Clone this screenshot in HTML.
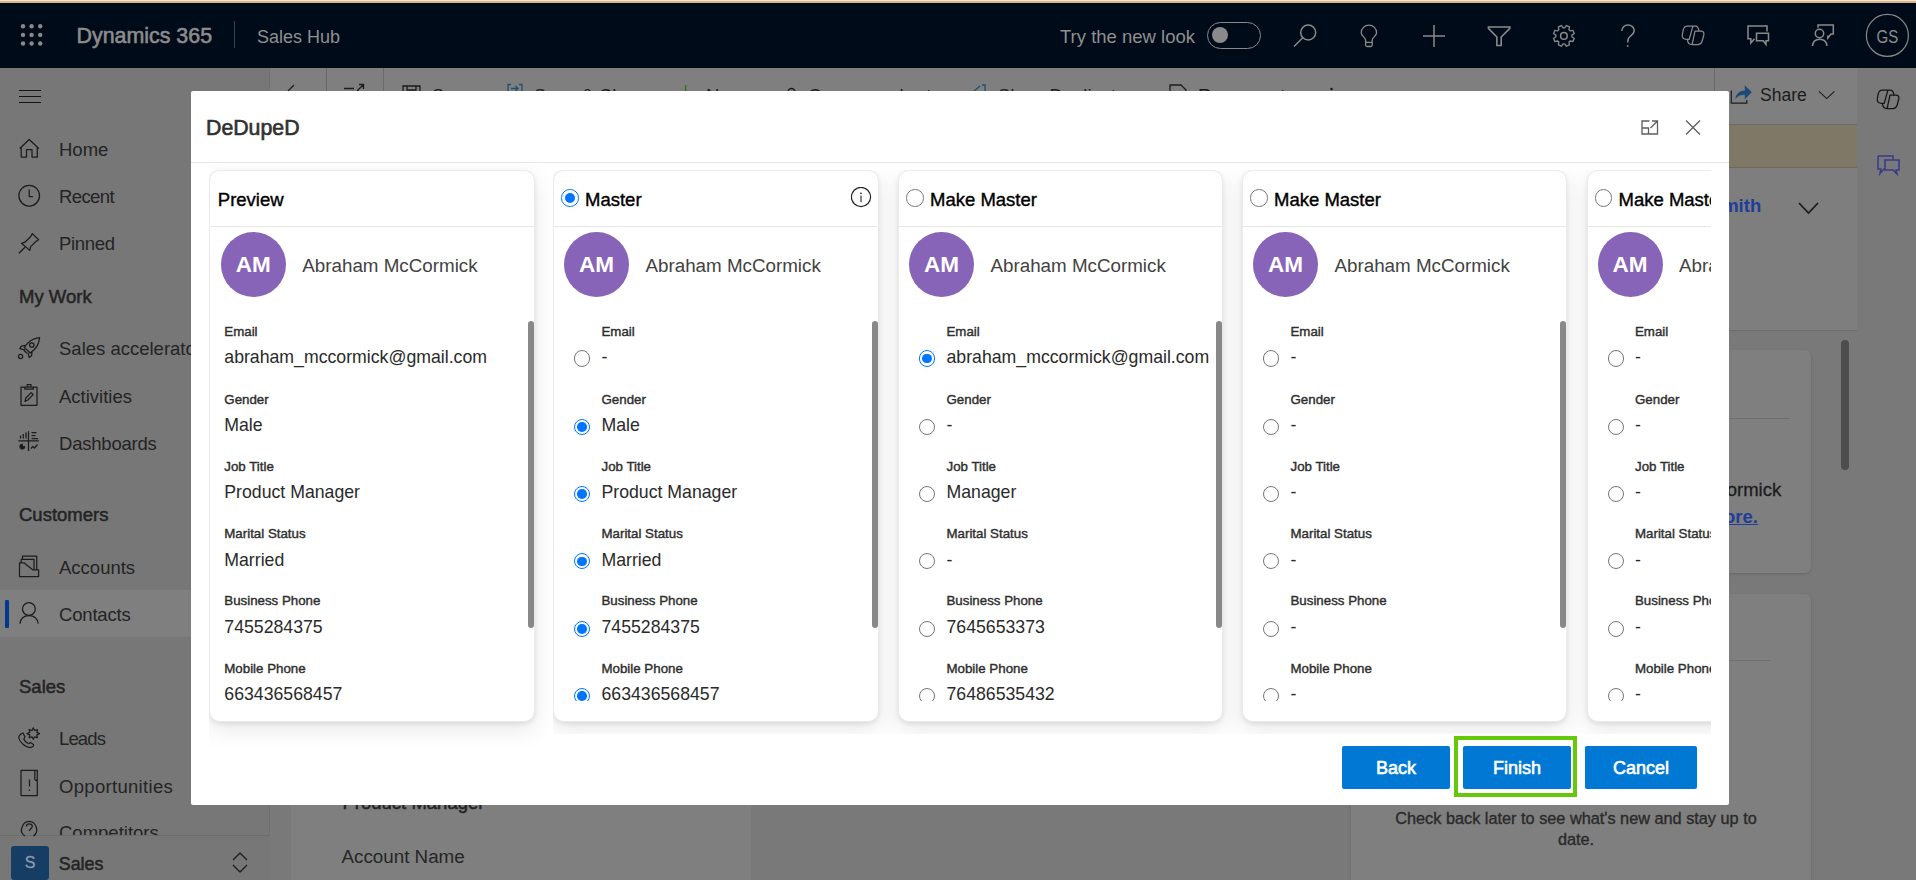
<!DOCTYPE html><html><head><meta charset="utf-8"><style>
html,body{margin:0;padding:0}
body{width:1916px;height:880px;overflow:hidden;position:relative;font-family:"Liberation Sans", sans-serif;background:#7a7a7a}
.t{position:absolute;white-space:nowrap;line-height:1}
</style></head><body>
<div style="position:absolute;left:0px;top:0px;width:1916px;height:68px;background:#000b19"></div>
<div style="position:absolute;left:0px;top:0px;width:1916px;height:1px;background:#ffe3bd"></div>
<div style="position:absolute;left:0px;top:1px;width:1916px;height:2px;background:#d2b796"></div>
<svg style="position:absolute;left:0;top:0" width="60" height="68" fill="#8a8a8a"><circle cx="23.0" cy="26.3" r="2.2"/><circle cx="23.0" cy="34.9" r="2.2"/><circle cx="23.0" cy="43.5" r="2.2"/><circle cx="31.6" cy="26.3" r="2.2"/><circle cx="31.6" cy="34.9" r="2.2"/><circle cx="31.6" cy="43.5" r="2.2"/><circle cx="40.2" cy="26.3" r="2.2"/><circle cx="40.2" cy="34.9" r="2.2"/><circle cx="40.2" cy="43.5" r="2.2"/></svg>
<div class="t" style="left:76.5px;top:25.88px;font-size:21.4px;color:#8c8c8c;-webkit-text-stroke:0.6px #8c8c8c;">Dynamics 365</div>
<div style="position:absolute;left:234px;top:21px;width:1px;height:27px;background:#3a3f4a"></div>
<div class="t" style="left:257px;top:28.26px;font-size:18px;color:#8f8f8f;">Sales Hub</div>
<div class="t" style="left:1060px;top:27.54px;font-size:18.5px;color:#8f8f8f;">Try the new look</div>
<div style="position:absolute;left:1207px;top:22px;width:54px;height:27px;border:1px solid #8a8a8a;border-radius:14px;box-sizing:border-box"></div>
<div style="position:absolute;left:1212px;top:27px;width:16px;height:16px;background:#8a8a8a;border-radius:50%"></div>
<svg style="position:absolute;left:0;top:0" width="1916" height="68">
<g fill="none" stroke="#8a8a8a" stroke-width="1.5">
<circle cx="1308.2" cy="32.5" r="7.5"/><line x1="1303" y1="37.5" x2="1294" y2="46.5"/>
<path d="M1365.6 40 C1365.6 37.5 1361.2 36 1361.2 32.8 A7.7 7.7 0 0 1 1376.6 32.8 C1376.6 36 1372.2 37.5 1372.2 40 L1372.2 45 Q1372.2 46.5 1370.6 46.5 L1367.2 46.5 Q1365.6 46.5 1365.6 45 Z M1365.6 42.3 L1372.2 42.3" stroke-width="1.3"/>
<line x1="1423" y1="36" x2="1445" y2="36"/><line x1="1434" y1="25" x2="1434" y2="47"/>
<path d="M1488.4 27 L1509.8 27 L1509.8 28.4 L1501.2 37 L1501.2 45.5 L1496.9 45.5 L1496.9 37 L1488.4 28.4 Z" stroke-width="1.6"/>
<circle cx="1563.9" cy="35.9" r="3.3"/>
<path d="M1564.67 27.94 L1566.37 25.59 L1569.44 26.86 L1568.99 29.73 L1570.07 30.81 L1572.94 30.36 L1574.21 33.43 L1571.86 35.13 L1571.86 36.67 L1574.21 38.37 L1572.94 41.44 L1570.07 40.99 L1568.99 42.07 L1569.44 44.94 L1566.37 46.21 L1564.67 43.86 L1563.13 43.86 L1561.43 46.21 L1558.36 44.94 L1558.81 42.07 L1557.73 40.99 L1554.86 41.44 L1553.59 38.37 L1555.94 36.67 L1555.94 35.13 L1553.59 33.43 L1554.86 30.36 L1557.73 30.81 L1558.81 29.73 L1558.36 26.86 L1561.43 25.59 L1563.13 27.94 Z" stroke-width="1.3"/>
<path d="M1621.8 31 C1621.8 27.5 1624.5 25 1628 25 C1631.5 25 1634.2 27.5 1634.2 30.5 C1634.2 33.5 1632 35 1630 36.5 C1628.3 37.8 1627.7 39 1627.7 42.5"/>
<circle cx="1627.7" cy="46" r="0.9" fill="#8a8a8a" stroke="none"/>
<g transform="translate(1670 18)" fill="none" stroke="#8a8a8a" stroke-width="1.25" stroke-linejoin="round"><path d="M22.9 8.2 L17.5 8.2 Q14.2 8.2 13.2 12 L12.4 16.5 Q11.6 21.3 16.5 21.3 L19.2 21.3 Z M22.9 8.2 L25.5 8.2 Q28 8.2 29.1 13.1 M25 13.1 L30.8 13.1 Q34.6 13.1 33.8 17 L32.3 22.5 Q31.2 26.6 27.5 26.6 L22.1 26.6 Z M17.4 21.3 Q17.6 26.6 22.1 26.6"/></g>
<path d="M1767 31.5 L1767 26 L1748 26 L1748 38.8 L1750.8 38.8 L1750.8 43 L1754.5 38.8"/>
<path d="M1756.5 33.3 L1768.5 33.3 L1768.5 40.8 L1766 40.8 L1766 44.5 L1763.2 40.8 L1756.5 40.8 Z"/>
<circle cx="1819.5" cy="33.5" r="4.2"/><path d="M1812.5 46 C1813 41.5 1815.5 39.3 1819.7 39.3 C1824 39.3 1826.5 41.5 1827 46"/>
<path d="M1818 27.8 L1818 25 L1833.3 25 L1833.3 34 L1831 34 L1827.8 38 L1827.8 35.5"/>
<circle cx="1887.4" cy="35.4" r="21" stroke-width="1.2"/>
</g></svg>
<div class="t" style="left:1866px;top:28.6px;width:43px;text-align:center;font-size:17.5px;color:#8f8f8f;transform:scaleX(.86)">GS</div>
<div style="position:absolute;left:0px;top:68px;width:270px;height:812px;background:#777777"></div>
<div style="position:absolute;left:269px;top:68px;width:1px;height:812px;background:#6f6f6f"></div>
<div style="position:absolute;left:19px;top:90px;width:22px;height:1.2px;background:#141414"></div>
<div style="position:absolute;left:19px;top:96px;width:22px;height:1.2px;background:#141414"></div>
<div style="position:absolute;left:19px;top:101.5px;width:22px;height:1.2px;background:#141414"></div>
<div class="t" style="left:59px;top:141.04px;font-size:18.5px;color:#242424;letter-spacing:0px;">Home</div>
<div class="t" style="left:59px;top:188.04px;font-size:18.5px;color:#242424;letter-spacing:-0.6px;">Recent</div>
<div class="t" style="left:59px;top:235.04px;font-size:18.5px;color:#242424;letter-spacing:-0.32px;">Pinned</div>
<div class="t" style="left:19px;top:288.04px;font-size:18.5px;color:#242424;-webkit-text-stroke:0.5px #242424;">My Work</div>
<div class="t" style="left:59px;top:339.54px;font-size:18.5px;color:#242424;letter-spacing:0px;">Sales accelerator</div>
<div class="t" style="left:59px;top:387.54px;font-size:18.5px;color:#242424;letter-spacing:0px;">Activities</div>
<div class="t" style="left:59px;top:434.54px;font-size:18.5px;color:#242424;letter-spacing:-0.21px;">Dashboards</div>
<div class="t" style="left:19px;top:505.54px;font-size:18.5px;color:#242424;-webkit-text-stroke:0.5px #242424;">Customers</div>
<div style="position:absolute;left:0px;top:590px;width:270px;height:47px;background:#7f7f7f"></div>
<div style="position:absolute;left:5px;top:600px;width:4px;height:28px;background:#003a8f;border-radius:1px"></div>
<div class="t" style="left:59px;top:558.54px;font-size:18.5px;color:#242424;letter-spacing:0px;">Accounts</div>
<div class="t" style="left:59px;top:605.54px;font-size:18.5px;color:#242424;letter-spacing:-0.18px;">Contacts</div>
<div class="t" style="left:19px;top:677.54px;font-size:18.5px;color:#242424;-webkit-text-stroke:0.5px #242424;">Sales</div>
<div class="t" style="left:59px;top:730.04px;font-size:18.5px;color:#242424;letter-spacing:-0.88px;">Leads</div>
<div class="t" style="left:59px;top:777.54px;font-size:18.5px;color:#242424;letter-spacing:0.31px;">Opportunities</div>
<div class="t" style="left:59px;top:824.04px;font-size:18.5px;color:#242424;letter-spacing:0px;">Competitors</div>
<div style="position:absolute;left:0px;top:835px;width:270px;height:45px;background:#777777;border-top:1px solid #6c6c6c"></div>
<div style="position:absolute;left:11px;top:846px;width:38px;height:34px;background:#163d63;border-radius:3px"></div>
<div class="t" style="left:11px;top:855px;width:38px;text-align:center;font-size:16px;color:#8d9bab;-webkit-text-stroke:0.3px #8d9bab">S</div>
<div class="t" style="left:58.8px;top:855.93px;font-size:17.8px;color:#242424;-webkit-text-stroke:0.5px #242424;">Sales</div>
<svg style="position:absolute;left:0;top:0" width="270" height="880"><g fill="none" stroke="#1c1c1c" stroke-width="1.25" stroke-linejoin="round">
<path d="M19.8 148.5 L29.2 139.5 L38.8 148.5 M21.2 147.2 L21.2 157 L26.5 157 L26.5 149.5 L32 149.5 L32 157 L37.3 157 L37.3 147.2"/>
<circle cx="29.2" cy="195.7" r="10.3"/><path d="M29.2 189.5 L29.2 196.5 L33 196.5"/>
<path d="M18.9 253.3 L25 247.2 M21.5 243.3 L25.5 241.8 L31 236.2 L32.3 233.6 L38.7 239.8 L36.2 241.2 L30.6 246.6 L29.8 250.4 Z"/>
<path d="M24.3 347.5 C28 341.5 33 338.2 39.6 337.6 C39.2 344 35.8 349.2 30.2 353 Z M25.6 345.4 L21.2 346.2 L19.8 348.6 L24.8 349.8 M32 351.6 L31.6 355.8 L29.2 357.6 L28 352.8"/><circle cx="31.8" cy="345" r="2.2"/><circle cx="20.6" cy="356.4" r="2.1"/><path d="M27 353.2 L23.8 350.2"/>
<rect x="21" y="387" width="16" height="18.3"/><path d="M24.8 387 L24.8 389.2 L33.3 389.2 L33.3 387 M27.2 387 L27.2 384.5 L31 384.5 L31 387 M25 401.5 L25.8 398 L31.2 392.6 L33.2 394.6 L27.8 400 Z"/>
<path d="M18.4 440.8 L38.8 440.8 M28.5 431.2 L28.5 451.1 M20.5 438.5 L20.5 435.5 M23.3 438.5 L23.3 434 M26 438.5 L26 432.5 M31.5 432.5 L36.5 432.5 M31.5 435.5 L35.5 435.5 M31.5 438.5 L38 438.5 M31 448.5 L32.8 446.5 L34.5 448 L37.5 444.5"/><path d="M22.3 444.3 A2.3 2.3 0 1 0 24.6 446.6 L22.3 446.6 Z" fill="#1c1c1c"/>
<path d="M19.5 562.8 L24 562.8 L32.6 569.8 L38.6 569.8 L38.6 576.5 L19.5 576.5 Z M21.2 562.8 L21.2 559.3 L34 559.3 L34 569.8 M22.5 559.3 L22.5 556.1 L36.7 556.1 L36.7 569.8"/>
<circle cx="28.9" cy="609" r="6.4"/><path d="M19.9 623.7 C20.5 618.5 24 615.6 29 615.6 C34 615.6 37.5 618.5 38.2 623.7"/>
<path d="M23 733 C20.5 734 18.5 735.5 18.8 738 C19.5 742 25.5 747.5 30 747.5 C32.5 747.5 34 746 33.5 744.5 L30.5 742.5 L28.5 743.8 C26 742.5 24.5 741 23.8 739 L25 737 Z"/>
<path d="M33.3 727.8 L34.6 730.5 L37.4 729.6 L36.9 732.4 L39.5 733.6 L36.9 734.9 L37.4 737.6 L34.6 736.8 L33.3 739.3 L32 736.8 L29.2 737.6 L29.7 734.9 L27.1 733.6 L29.7 732.4 L29.2 729.6 L32 730.5 Z"/>
<rect x="21" y="770.4" width="16.3" height="25.1"/><path d="M34.8 770.4 L34.8 779.5 Q36 781.5 37.3 779.5 M29.5 779.5 L29.5 786.5 M29.5 789.5 L29.5 791"/>
<path d="M25 836 C22 834 21 831 21.5 829 C22.5 824.5 25.5 821.3 29.2 821.3 C33 821.3 36 824.5 36.7 829 C37 831 36 834 33.5 836 M26.3 826.5 C26.5 824.5 28 823.8 29.3 823.8 C31 823.8 32.3 825 32.3 826.5 C32.3 828.5 29.3 829 29.3 831"/>
<path d="M233 860 L240 853 L247 860 M233 865 L240 872 L247 865"/>
</g></svg>
<div style="position:absolute;left:270px;top:68px;width:1587px;height:812px;background:#797979"></div>
<div style="position:absolute;left:270px;top:68px;width:1587px;height:56px;background:#7f7f7f"></div>
<div style="position:absolute;left:326px;top:68px;width:1px;height:56px;background:#6a6a6a"></div>
<div style="position:absolute;left:383px;top:68px;width:1px;height:56px;background:#6a6a6a"></div>
<div style="position:absolute;left:1714px;top:68px;width:1px;height:56px;background:#6a6a6a"></div>
<div class="t" style="left:432px;top:87.14px;font-size:18.5px;color:#1c1c1c;">Save</div>
<div class="t" style="left:534px;top:87.14px;font-size:18.5px;color:#1c1c1c;">Save &amp; Close</div>
<div class="t" style="left:706px;top:87.14px;font-size:18.5px;color:#1c1c1c;">New</div>
<div class="t" style="left:808px;top:87.14px;font-size:18.5px;color:#1c1c1c;">Open org chart</div>
<div class="t" style="left:998px;top:87.14px;font-size:18.5px;color:#1c1c1c;">Show Duplicates</div>
<div class="t" style="left:1198px;top:87.14px;font-size:18.5px;color:#1c1c1c;">Run report</div>
<div class="t" style="left:1760px;top:86.79px;font-size:17.5px;color:#1c1c1c;">Share</div>
<svg style="position:absolute;left:0;top:0" width="1400" height="100"><g fill="none" stroke="#1c1c1c" stroke-width="1.3"><path d="M294 85 L288 91"/><path d="M344 88.5 L354 88.5 M357 91 L363.5 84.5 M359 84.5 L363.5 84.5 L363.5 89"/><path d="M403 92 L403 86 L420 86 L420 92 M407 86 L407 90 L416 90 L416 86"/><path d="M788 92 A3.5 3.5 0 0 1 795 92"/><path d="M1170 92 L1170 85 L1181 85 L1186 90 L1186 92"/></g><g fill="none" stroke="#1f4e79" stroke-width="1.3"><path d="M510 92 L508 92 L508 84.5 L511 84.5 M519 84.5 L522 84.5 L522 92 M511 88.5 L518 88.5 M515.5 86 L518 88.5 L515.5 91"/><path d="M973 92 L980 86 M982 85 L985 85 L985 92"/></g><path d="M685.6 85 L685.6 92" stroke="#2b7a0b" stroke-width="1.5"/><circle cx="1331.5" cy="89" r="1.3" fill="#1c1c1c"/></svg>
<div style="position:absolute;left:1714px;top:124px;width:143px;height:44px;background:#7f7866;border-top:1px solid #6c6a60;border-bottom:1px solid #6c6a60;box-sizing:border-box"></div>
<div style="position:absolute;left:1714px;top:168px;width:143px;height:162px;background:#7e7e7e"></div>
<div style="position:absolute;left:1714px;top:330px;width:143px;height:1px;background:#6e6e6e"></div>
<div class="t" style="left:1660.5px;top:196.74px;font-size:18.5px;color:#1f3d99;font-weight:bold;">John Smith</div>
<div style="position:absolute;left:1650px;top:350px;width:161px;height:223px;background:#7f7f7f;border-radius:6px;box-shadow:0 1px 3px rgba(0,0,0,.15)"></div>
<div style="position:absolute;left:1650px;top:418px;width:139px;height:1px;background:#6e6e6e"></div>
<div class="t" style="left:1608.5px;top:480.84px;font-size:18.5px;color:#1c1c1c;-webkit-text-stroke:0.3px #1c1c1c;">Abraham McCormick</div>
<div class="t" style="left:1652px;top:507.84px;font-size:18.5px;color:#1f3d99;font-weight:bold;"><u>Learn more.</u></div>
<div style="position:absolute;left:1841px;top:340px;width:8px;height:130px;background:#4d4d4d;border-radius:4px"></div>
<div style="position:absolute;left:1351px;top:594px;width:460px;height:300px;background:#7f7f7f;border-radius:6px;box-shadow:0 1px 3px rgba(0,0,0,.15)"></div>
<div style="position:absolute;left:1650px;top:660px;width:120px;height:1px;background:#6e6e6e"></div>
<div class="t" style="left:1386px;top:808px;width:380px;text-align:center;font-size:16.3px;line-height:21px;color:#2a2a2a;white-space:normal;-webkit-text-stroke:0.35px #2a2a2a">Check back later to see what's new and stay up to date.</div>
<div style="position:absolute;left:291px;top:700px;width:460px;height:200px;background:#7f7f7f;border-radius:6px"></div>
<div class="t" style="left:342.5px;top:793.84px;font-size:18.5px;color:#242424;-webkit-text-stroke:0.5px #242424;">Product Manager</div>
<div class="t" style="left:341.5px;top:848.09px;font-size:18.8px;color:#262626;">Account Name</div>
<div style="position:absolute;left:1857px;top:68px;width:59px;height:812px;background:#797979"></div>
<svg style="position:absolute;left:0;top:0" width="1916" height="240"><g fill="none" stroke="#1c1c1c" stroke-width="1.5">
<path d="M1731.3 90.5 L1731.3 103.2 L1746.8 103.2 L1746.8 100" stroke-width="1.2"/><path d="M1819 91.3 L1826.7 98.6 L1834.4 91.3" stroke-width="1.1"/>
<path d="M1799 203 L1808.5 213 L1818 203" stroke-width="1.8"/>
<g transform="translate(1865 82)" fill="none" stroke="#141414" stroke-width="1.25" stroke-linejoin="round"><path d="M22.9 8.2 L17.5 8.2 Q14.2 8.2 13.2 12 L12.4 16.5 Q11.6 21.3 16.5 21.3 L19.2 21.3 Z M22.9 8.2 L25.5 8.2 Q28 8.2 29.1 13.1 M25 13.1 L30.8 13.1 Q34.6 13.1 33.8 17 L32.3 22.5 Q31.2 26.6 27.5 26.6 L22.1 26.6 Z M17.4 21.3 Q17.6 26.6 22.1 26.6"/></g>
</g>
<path d="M1735.3 99 C1736 93.5 1740 90.8 1744.8 90.6 L1744.8 85.3 L1751.8 92.2 L1744.8 99.2 L1744.8 94.8 C1740.5 94.8 1737.5 96.3 1735.3 99 Z" fill="#1f4a78"/>
<g fill="none" stroke="#3a3a8c" stroke-width="1.6"><path d="M1878 156 L1893 156 L1893 159 M1878 156 L1878 169 L1881 169 L1880 173.5 L1884 169 L1885 169"/><path d="M1885 160 L1899 160 L1899 170 L1896 170 L1897 174 L1893 170 L1885 170 Z"/></g>
</svg>
<div id="dlg" style="position:absolute;left:191px;top:91px;width:1538px;height:714px;background:#fff;border-radius:2px">
</div>
<div class="t" style="left:206px;top:118.37px;font-size:21.3px;color:#323130;-webkit-text-stroke:0.65px #323130;">DeDupeD</div>
<div style="position:absolute;left:191px;top:162px;width:1538px;height:1px;background:#e6e6e6"></div>
<svg style="position:absolute;left:0;top:0" width="1916" height="200"><g fill="none" stroke="#605e5c" stroke-width="1.3">
<path d="M1649.5 121 L1642 121 L1642 134 L1657.5 134 L1657.5 126.5 M1652 121 L1657.5 121 L1657.5 126.5 M1657 121.5 L1650.5 128 M1642 128 L1648.5 128 L1648.5 134"/>
<path d="M1686 120.5 L1700 134.5 M1700 120.5 L1686 134.5"/>
</g></svg>
<div style="position:absolute;left:209px;top:164px;width:344px;height:640px;overflow:hidden"><div style="position:absolute;left:-209px;top:-164px;width:1916px;height:880px">
<div style="position:absolute;left:209px;top:170px;width:326px;height:551.5px;box-sizing:border-box;background:#fff;border:1px solid #ebebeb;border-radius:11px;box-shadow:0 2px 5px rgba(0,0,0,.09), 0 8px 24px rgba(0,0,0,.09)"></div>
<div style="position:absolute;left:210.8px;top:226px;width:323px;height:1px;background:#e6e6e6"></div>
<div class="t" style="left:217.8px;top:190.54px;font-size:18.5px;color:#000;-webkit-text-stroke:0.38px #000;">Preview</div>
<div style="position:absolute;left:209.8px;top:227px;width:324px;height:474px;overflow:hidden"><div style="position:absolute;left:-209.8px;top:-227px;width:1916px;height:880px">
<div style="position:absolute;left:221.0px;top:231.89999999999998px;width:65px;height:65px;border-radius:50%;background:#8764b8"></div>
<div class="t" style="left:235.8px;top:253.95px;font-size:22.5px;color:#fff;font-weight:bold;">AM</div>
<div class="t" style="left:302.3px;top:256.89px;font-size:18.8px;color:#424242;">Abraham McCormick</div>
<div class="t" style="left:224.3px;top:324.74px;font-size:13.3px;color:#2e2e2e;-webkit-text-stroke:0.4px #2e2e2e;">Email</div>
<div class="t" style="left:224.3px;top:348.72px;font-size:17.7px;color:#2a2a2a;">abraham_mccormick@gmail.com</div>
<div class="t" style="left:224.3px;top:392.74px;font-size:13.3px;color:#2e2e2e;-webkit-text-stroke:0.4px #2e2e2e;">Gender</div>
<div class="t" style="left:224.3px;top:417.32px;font-size:17.7px;color:#2a2a2a;">Male</div>
<div class="t" style="left:224.3px;top:459.94px;font-size:13.3px;color:#2e2e2e;-webkit-text-stroke:0.4px #2e2e2e;">Job Title</div>
<div class="t" style="left:224.3px;top:484.32px;font-size:17.7px;color:#2a2a2a;">Product Manager</div>
<div class="t" style="left:224.3px;top:527.14px;font-size:13.3px;color:#2e2e2e;-webkit-text-stroke:0.4px #2e2e2e;">Marital Status</div>
<div class="t" style="left:224.3px;top:551.52px;font-size:17.7px;color:#2a2a2a;">Married</div>
<div class="t" style="left:224.3px;top:594.04px;font-size:13.3px;color:#2e2e2e;-webkit-text-stroke:0.4px #2e2e2e;">Business Phone</div>
<div class="t" style="left:224.3px;top:619.02px;font-size:17.7px;color:#2a2a2a;">7455284375</div>
<div class="t" style="left:224.3px;top:661.64px;font-size:13.3px;color:#2e2e2e;-webkit-text-stroke:0.4px #2e2e2e;">Mobile Phone</div>
<div class="t" style="left:224.3px;top:686.02px;font-size:17.7px;color:#2a2a2a;">663436568457</div>
</div></div>
<div style="position:absolute;left:528px;top:321px;width:6px;height:307px;background:#888;border-radius:3px"></div>
</div></div>
<div style="position:absolute;left:553px;top:170px;width:1158px;height:563.5px;overflow:hidden">
<div style="position:absolute;left:-553px;top:-170px;width:1916px;height:880px">
<div style="position:absolute;left:553px;top:170px;width:326px;height:551.5px;box-sizing:border-box;background:#fff;border:1px solid #ebebeb;border-radius:11px;box-shadow:0 2px 5px rgba(0,0,0,.09), 0 8px 24px rgba(0,0,0,.09)"></div>
<div style="position:absolute;left:554px;top:226px;width:323px;height:1px;background:#e6e6e6"></div>
<div style="position:absolute;left:561.25px;top:189.05px;width:17.5px;height:17.5px;box-sizing:border-box;border:1.6px solid #0075ff;border-radius:50%"></div><div style="position:absolute;left:564.7px;top:192.5px;width:10.6px;height:10.6px;background:#0075ff;border-radius:50%"></div>
<div class="t" style="left:585px;top:190.64px;font-size:18.5px;color:#000;-webkit-text-stroke:0.38px #000;">Master</div>
<svg style="position:absolute;left:850.6px;top:187.4px" width="22" height="22"><circle cx="10" cy="10" r="9.6" fill="none" stroke="#242424" stroke-width="1.2"/><circle cx="10" cy="6.3" r="0.9" fill="#242424"/><rect x="9.45" y="8.6" width="1.1" height="6.6" fill="#242424"/></svg>
<div style="position:absolute;left:553px;top:227px;width:324px;height:474px;overflow:hidden"><div style="position:absolute;left:-553px;top:-227px;width:1916px;height:880px">
<div style="position:absolute;left:564.2px;top:231.89999999999998px;width:65px;height:65px;border-radius:50%;background:#8764b8"></div>
<div class="t" style="left:579px;top:253.95px;font-size:22.5px;color:#fff;font-weight:bold;">AM</div>
<div class="t" style="left:645.5px;top:256.89px;font-size:18.8px;color:#424242;">Abraham McCormick</div>
<div class="t" style="left:601.5px;top:324.74px;font-size:13.3px;color:#2e2e2e;-webkit-text-stroke:0.4px #2e2e2e;">Email</div>
<div class="t" style="left:601.5px;top:348.72px;font-size:17.7px;color:#2a2a2a;">-</div>
<div style="position:absolute;left:574.0px;top:350.3px;width:16.4px;height:16.4px;box-sizing:border-box;border:1.3px solid #767676;border-radius:50%"></div>
<div class="t" style="left:601.5px;top:392.74px;font-size:13.3px;color:#2e2e2e;-webkit-text-stroke:0.4px #2e2e2e;">Gender</div>
<div class="t" style="left:601.5px;top:417.32px;font-size:17.7px;color:#2a2a2a;">Male</div>
<div style="position:absolute;left:574.0px;top:418.90000000000003px;width:16.4px;height:16.4px;box-sizing:border-box;border:1.6px solid #0075ff;border-radius:50%"></div><div style="position:absolute;left:577.4000000000001px;top:422.3px;width:9.6px;height:9.6px;background:#0075ff;border-radius:50%"></div>
<div class="t" style="left:601.5px;top:459.94px;font-size:13.3px;color:#2e2e2e;-webkit-text-stroke:0.4px #2e2e2e;">Job Title</div>
<div class="t" style="left:601.5px;top:484.32px;font-size:17.7px;color:#2a2a2a;">Product Manager</div>
<div style="position:absolute;left:574.0px;top:485.90000000000003px;width:16.4px;height:16.4px;box-sizing:border-box;border:1.6px solid #0075ff;border-radius:50%"></div><div style="position:absolute;left:577.4000000000001px;top:489.3px;width:9.6px;height:9.6px;background:#0075ff;border-radius:50%"></div>
<div class="t" style="left:601.5px;top:527.14px;font-size:13.3px;color:#2e2e2e;-webkit-text-stroke:0.4px #2e2e2e;">Marital Status</div>
<div class="t" style="left:601.5px;top:551.52px;font-size:17.7px;color:#2a2a2a;">Married</div>
<div style="position:absolute;left:574.0px;top:553.0999999999999px;width:16.4px;height:16.4px;box-sizing:border-box;border:1.6px solid #0075ff;border-radius:50%"></div><div style="position:absolute;left:577.4000000000001px;top:556.5px;width:9.6px;height:9.6px;background:#0075ff;border-radius:50%"></div>
<div class="t" style="left:601.5px;top:594.04px;font-size:13.3px;color:#2e2e2e;-webkit-text-stroke:0.4px #2e2e2e;">Business Phone</div>
<div class="t" style="left:601.5px;top:619.02px;font-size:17.7px;color:#2a2a2a;">7455284375</div>
<div style="position:absolute;left:574.0px;top:620.5999999999999px;width:16.4px;height:16.4px;box-sizing:border-box;border:1.6px solid #0075ff;border-radius:50%"></div><div style="position:absolute;left:577.4000000000001px;top:624.0px;width:9.6px;height:9.6px;background:#0075ff;border-radius:50%"></div>
<div class="t" style="left:601.5px;top:661.64px;font-size:13.3px;color:#2e2e2e;-webkit-text-stroke:0.4px #2e2e2e;">Mobile Phone</div>
<div class="t" style="left:601.5px;top:686.02px;font-size:17.7px;color:#2a2a2a;">663436568457</div>
<div style="position:absolute;left:574.0px;top:687.5999999999999px;width:16.4px;height:16.4px;box-sizing:border-box;border:1.6px solid #0075ff;border-radius:50%"></div><div style="position:absolute;left:577.4000000000001px;top:691.0px;width:9.6px;height:9.6px;background:#0075ff;border-radius:50%"></div>
</div></div>
<div style="position:absolute;left:872px;top:321px;width:6px;height:307px;background:#888;border-radius:3px"></div>
<div style="position:absolute;left:898px;top:170px;width:325px;height:551.5px;box-sizing:border-box;background:#fff;border:1px solid #ebebeb;border-radius:11px;box-shadow:0 2px 5px rgba(0,0,0,.09), 0 8px 24px rgba(0,0,0,.09)"></div>
<div style="position:absolute;left:899px;top:226px;width:323px;height:1px;background:#e6e6e6"></div>
<div style="position:absolute;left:906.25px;top:189.05px;width:17.5px;height:17.5px;box-sizing:border-box;border:1.3px solid #767676;border-radius:50%"></div>
<div class="t" style="left:930px;top:190.64px;font-size:18.5px;color:#000;-webkit-text-stroke:0.38px #000;">Make Master</div>
<div style="position:absolute;left:898px;top:227px;width:324px;height:474px;overflow:hidden"><div style="position:absolute;left:-898px;top:-227px;width:1916px;height:880px">
<div style="position:absolute;left:909.2px;top:231.89999999999998px;width:65px;height:65px;border-radius:50%;background:#8764b8"></div>
<div class="t" style="left:924px;top:253.95px;font-size:22.5px;color:#fff;font-weight:bold;">AM</div>
<div class="t" style="left:990.5px;top:256.89px;font-size:18.8px;color:#424242;">Abraham McCormick</div>
<div class="t" style="left:946.5px;top:324.74px;font-size:13.3px;color:#2e2e2e;-webkit-text-stroke:0.4px #2e2e2e;">Email</div>
<div class="t" style="left:946.5px;top:348.72px;font-size:17.7px;color:#2a2a2a;">abraham_mccormick@gmail.com</div>
<div style="position:absolute;left:919.0px;top:350.3px;width:16.4px;height:16.4px;box-sizing:border-box;border:1.6px solid #0075ff;border-radius:50%"></div><div style="position:absolute;left:922.4000000000001px;top:353.7px;width:9.6px;height:9.6px;background:#0075ff;border-radius:50%"></div>
<div class="t" style="left:946.5px;top:392.74px;font-size:13.3px;color:#2e2e2e;-webkit-text-stroke:0.4px #2e2e2e;">Gender</div>
<div class="t" style="left:946.5px;top:417.32px;font-size:17.7px;color:#2a2a2a;">-</div>
<div style="position:absolute;left:919.0px;top:418.90000000000003px;width:16.4px;height:16.4px;box-sizing:border-box;border:1.3px solid #767676;border-radius:50%"></div>
<div class="t" style="left:946.5px;top:459.94px;font-size:13.3px;color:#2e2e2e;-webkit-text-stroke:0.4px #2e2e2e;">Job Title</div>
<div class="t" style="left:946.5px;top:484.32px;font-size:17.7px;color:#2a2a2a;">Manager</div>
<div style="position:absolute;left:919.0px;top:485.90000000000003px;width:16.4px;height:16.4px;box-sizing:border-box;border:1.3px solid #767676;border-radius:50%"></div>
<div class="t" style="left:946.5px;top:527.14px;font-size:13.3px;color:#2e2e2e;-webkit-text-stroke:0.4px #2e2e2e;">Marital Status</div>
<div class="t" style="left:946.5px;top:551.52px;font-size:17.7px;color:#2a2a2a;">-</div>
<div style="position:absolute;left:919.0px;top:553.0999999999999px;width:16.4px;height:16.4px;box-sizing:border-box;border:1.3px solid #767676;border-radius:50%"></div>
<div class="t" style="left:946.5px;top:594.04px;font-size:13.3px;color:#2e2e2e;-webkit-text-stroke:0.4px #2e2e2e;">Business Phone</div>
<div class="t" style="left:946.5px;top:619.02px;font-size:17.7px;color:#2a2a2a;">7645653373</div>
<div style="position:absolute;left:919.0px;top:620.5999999999999px;width:16.4px;height:16.4px;box-sizing:border-box;border:1.3px solid #767676;border-radius:50%"></div>
<div class="t" style="left:946.5px;top:661.64px;font-size:13.3px;color:#2e2e2e;-webkit-text-stroke:0.4px #2e2e2e;">Mobile Phone</div>
<div class="t" style="left:946.5px;top:686.02px;font-size:17.7px;color:#2a2a2a;">76486535432</div>
<div style="position:absolute;left:919.0px;top:687.5999999999999px;width:16.4px;height:16.4px;box-sizing:border-box;border:1.3px solid #767676;border-radius:50%"></div>
</div></div>
<div style="position:absolute;left:1216px;top:321px;width:6px;height:307px;background:#888;border-radius:3px"></div>
<div style="position:absolute;left:1242px;top:170px;width:325px;height:551.5px;box-sizing:border-box;background:#fff;border:1px solid #ebebeb;border-radius:11px;box-shadow:0 2px 5px rgba(0,0,0,.09), 0 8px 24px rgba(0,0,0,.09)"></div>
<div style="position:absolute;left:1243px;top:226px;width:323px;height:1px;background:#e6e6e6"></div>
<div style="position:absolute;left:1250.25px;top:189.05px;width:17.5px;height:17.5px;box-sizing:border-box;border:1.3px solid #767676;border-radius:50%"></div>
<div class="t" style="left:1274px;top:190.64px;font-size:18.5px;color:#000;-webkit-text-stroke:0.38px #000;">Make Master</div>
<div style="position:absolute;left:1242px;top:227px;width:324px;height:474px;overflow:hidden"><div style="position:absolute;left:-1242px;top:-227px;width:1916px;height:880px">
<div style="position:absolute;left:1253.2px;top:231.89999999999998px;width:65px;height:65px;border-radius:50%;background:#8764b8"></div>
<div class="t" style="left:1268px;top:253.95px;font-size:22.5px;color:#fff;font-weight:bold;">AM</div>
<div class="t" style="left:1334.5px;top:256.89px;font-size:18.8px;color:#424242;">Abraham McCormick</div>
<div class="t" style="left:1290.5px;top:324.74px;font-size:13.3px;color:#2e2e2e;-webkit-text-stroke:0.4px #2e2e2e;">Email</div>
<div class="t" style="left:1290.5px;top:348.72px;font-size:17.7px;color:#2a2a2a;">-</div>
<div style="position:absolute;left:1263.0px;top:350.3px;width:16.4px;height:16.4px;box-sizing:border-box;border:1.3px solid #767676;border-radius:50%"></div>
<div class="t" style="left:1290.5px;top:392.74px;font-size:13.3px;color:#2e2e2e;-webkit-text-stroke:0.4px #2e2e2e;">Gender</div>
<div class="t" style="left:1290.5px;top:417.32px;font-size:17.7px;color:#2a2a2a;">-</div>
<div style="position:absolute;left:1263.0px;top:418.90000000000003px;width:16.4px;height:16.4px;box-sizing:border-box;border:1.3px solid #767676;border-radius:50%"></div>
<div class="t" style="left:1290.5px;top:459.94px;font-size:13.3px;color:#2e2e2e;-webkit-text-stroke:0.4px #2e2e2e;">Job Title</div>
<div class="t" style="left:1290.5px;top:484.32px;font-size:17.7px;color:#2a2a2a;">-</div>
<div style="position:absolute;left:1263.0px;top:485.90000000000003px;width:16.4px;height:16.4px;box-sizing:border-box;border:1.3px solid #767676;border-radius:50%"></div>
<div class="t" style="left:1290.5px;top:527.14px;font-size:13.3px;color:#2e2e2e;-webkit-text-stroke:0.4px #2e2e2e;">Marital Status</div>
<div class="t" style="left:1290.5px;top:551.52px;font-size:17.7px;color:#2a2a2a;">-</div>
<div style="position:absolute;left:1263.0px;top:553.0999999999999px;width:16.4px;height:16.4px;box-sizing:border-box;border:1.3px solid #767676;border-radius:50%"></div>
<div class="t" style="left:1290.5px;top:594.04px;font-size:13.3px;color:#2e2e2e;-webkit-text-stroke:0.4px #2e2e2e;">Business Phone</div>
<div class="t" style="left:1290.5px;top:619.02px;font-size:17.7px;color:#2a2a2a;">-</div>
<div style="position:absolute;left:1263.0px;top:620.5999999999999px;width:16.4px;height:16.4px;box-sizing:border-box;border:1.3px solid #767676;border-radius:50%"></div>
<div class="t" style="left:1290.5px;top:661.64px;font-size:13.3px;color:#2e2e2e;-webkit-text-stroke:0.4px #2e2e2e;">Mobile Phone</div>
<div class="t" style="left:1290.5px;top:686.02px;font-size:17.7px;color:#2a2a2a;">-</div>
<div style="position:absolute;left:1263.0px;top:687.5999999999999px;width:16.4px;height:16.4px;box-sizing:border-box;border:1.3px solid #767676;border-radius:50%"></div>
</div></div>
<div style="position:absolute;left:1560px;top:321px;width:6px;height:307px;background:#888;border-radius:3px"></div>
<div style="position:absolute;left:1586.5px;top:170px;width:325px;height:551.5px;box-sizing:border-box;background:#fff;border:1px solid #ebebeb;border-radius:11px;box-shadow:0 2px 5px rgba(0,0,0,.09), 0 8px 24px rgba(0,0,0,.09)"></div>
<div style="position:absolute;left:1587.5px;top:226px;width:323px;height:1px;background:#e6e6e6"></div>
<div style="position:absolute;left:1594.75px;top:189.05px;width:17.5px;height:17.5px;box-sizing:border-box;border:1.3px solid #767676;border-radius:50%"></div>
<div class="t" style="left:1618.5px;top:190.64px;font-size:18.5px;color:#000;-webkit-text-stroke:0.38px #000;">Make Master</div>
<div style="position:absolute;left:1586.5px;top:227px;width:324px;height:474px;overflow:hidden"><div style="position:absolute;left:-1586.5px;top:-227px;width:1916px;height:880px">
<div style="position:absolute;left:1597.7px;top:231.89999999999998px;width:65px;height:65px;border-radius:50%;background:#8764b8"></div>
<div class="t" style="left:1612.5px;top:253.95px;font-size:22.5px;color:#fff;font-weight:bold;">AM</div>
<div class="t" style="left:1679.0px;top:256.89px;font-size:18.8px;color:#424242;">Abraham McCormick</div>
<div class="t" style="left:1635.0px;top:324.74px;font-size:13.3px;color:#2e2e2e;-webkit-text-stroke:0.4px #2e2e2e;">Email</div>
<div class="t" style="left:1635.0px;top:348.72px;font-size:17.7px;color:#2a2a2a;">-</div>
<div style="position:absolute;left:1607.5px;top:350.3px;width:16.4px;height:16.4px;box-sizing:border-box;border:1.3px solid #767676;border-radius:50%"></div>
<div class="t" style="left:1635.0px;top:392.74px;font-size:13.3px;color:#2e2e2e;-webkit-text-stroke:0.4px #2e2e2e;">Gender</div>
<div class="t" style="left:1635.0px;top:417.32px;font-size:17.7px;color:#2a2a2a;">-</div>
<div style="position:absolute;left:1607.5px;top:418.90000000000003px;width:16.4px;height:16.4px;box-sizing:border-box;border:1.3px solid #767676;border-radius:50%"></div>
<div class="t" style="left:1635.0px;top:459.94px;font-size:13.3px;color:#2e2e2e;-webkit-text-stroke:0.4px #2e2e2e;">Job Title</div>
<div class="t" style="left:1635.0px;top:484.32px;font-size:17.7px;color:#2a2a2a;">-</div>
<div style="position:absolute;left:1607.5px;top:485.90000000000003px;width:16.4px;height:16.4px;box-sizing:border-box;border:1.3px solid #767676;border-radius:50%"></div>
<div class="t" style="left:1635.0px;top:527.14px;font-size:13.3px;color:#2e2e2e;-webkit-text-stroke:0.4px #2e2e2e;">Marital Status</div>
<div class="t" style="left:1635.0px;top:551.52px;font-size:17.7px;color:#2a2a2a;">-</div>
<div style="position:absolute;left:1607.5px;top:553.0999999999999px;width:16.4px;height:16.4px;box-sizing:border-box;border:1.3px solid #767676;border-radius:50%"></div>
<div class="t" style="left:1635.0px;top:594.04px;font-size:13.3px;color:#2e2e2e;-webkit-text-stroke:0.4px #2e2e2e;">Business Phone</div>
<div class="t" style="left:1635.0px;top:619.02px;font-size:17.7px;color:#2a2a2a;">-</div>
<div style="position:absolute;left:1607.5px;top:620.5999999999999px;width:16.4px;height:16.4px;box-sizing:border-box;border:1.3px solid #767676;border-radius:50%"></div>
<div class="t" style="left:1635.0px;top:661.64px;font-size:13.3px;color:#2e2e2e;-webkit-text-stroke:0.4px #2e2e2e;">Mobile Phone</div>
<div class="t" style="left:1635.0px;top:686.02px;font-size:17.7px;color:#2a2a2a;">-</div>
<div style="position:absolute;left:1607.5px;top:687.5999999999999px;width:16.4px;height:16.4px;box-sizing:border-box;border:1.3px solid #767676;border-radius:50%"></div>
</div></div>
<div style="position:absolute;left:1904.5px;top:321px;width:6px;height:307px;background:#888;border-radius:3px"></div>
</div></div>
<div style="position:absolute;left:1342px;top:746px;width:108px;height:42.5px;background:#0078d4;border-radius:2px;color:#fff;font-size:18px;-webkit-text-stroke:0.6px #fff;line-height:45.5px;text-align:center">Back</div>
<div style="position:absolute;left:1463px;top:746px;width:108px;height:42.5px;background:#0078d4;border-radius:2px;color:#fff;font-size:18px;-webkit-text-stroke:0.6px #fff;line-height:45.5px;text-align:center">Finish</div>
<div style="position:absolute;left:1585px;top:746px;width:112px;height:42.5px;background:#0078d4;border-radius:2px;color:#fff;font-size:18px;-webkit-text-stroke:0.6px #fff;line-height:45.5px;text-align:center">Cancel</div>
<div style="position:absolute;left:1454px;top:736px;width:123px;height:61px;box-sizing:border-box;border:4px solid #66c80a"></div>
</body></html>
